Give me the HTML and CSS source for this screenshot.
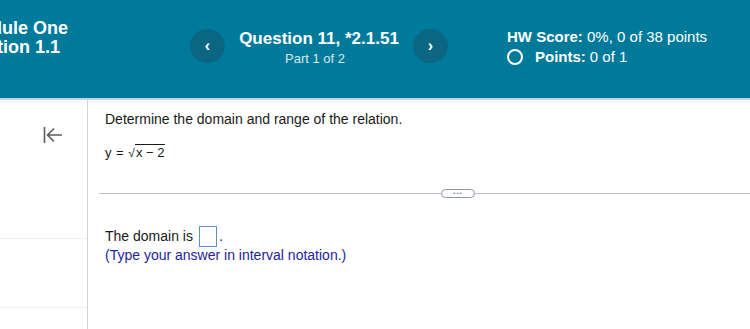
FILE: index.html
```html
<!doctype html>
<html>
<head>
    <meta charset="utf-8" />
    <title>Question 11</title>
    <link rel="stylesheet" href="styles.css">
</head>
<body>
<div class="header">
    <div class="header__crumbs">
        <div>Module One</div>
        <div>Section 1.1</div>
    </div>
    <div class="header__nav">
        <button class="nav-btn">&lsaquo;</button>
        <div class="header__title">
            <div class="header__question">Question 11, *2.1.51</div>
            <div class="header__part">Part 1 of 2</div>
        </div>
        <button class="nav-btn">&rsaquo;</button>
    </div>
    <div class="header__score">
        <div><b>HW Score:</b> 0%, 0 of 38 points</div>
        <div class="header__points"><span class="ring"></span><b>Points:</b> 0 of 1</div>
    </div>
</div>
<div class="main">
    <div class="sidebar">
        <svg class="sidebar__collapse" width="20" height="18" viewBox="0 0 20 18">
            <path d="M1.5 1v16M19 9H5M11 2.5L4.5 9l6.5 6.5" fill="none" stroke="#5c5c5c" stroke-width="1.6"/>
        </svg>
        <div class="sidebar__rule sidebar__rule--one"></div>
        <div class="sidebar__rule sidebar__rule--two"></div>
    </div>
    <div class="content">
        <div class="question">
            <p class="question__text">Determine the domain and range of the relation.</p>
            <p class="question__eq">y = <span class="radical">&radic;</span><span class="radicand">x &minus; 2</span></p>
        </div>
        <div class="divider">
            <span class="divider__pill">&bull;&bull;&bull;</span>
        </div>
        <div class="answer">
            <p class="answer__line">The domain is <span class="answer__box"></span>.</p>
            <p class="answer__hint">(Type your answer in interval notation.)</p>
        </div>
    </div>
</div>
</body>
</html>
```

FILE: styles.css
```css
body {
    margin: 0;
    font-family: "Liberation Sans", Arial, sans-serif;
    background: #fff;
    width: 750px;
    height: 329px;
    overflow: hidden;
}
.header {
    height: 98px;
    background-color: #007a9b;
    border-bottom: 2px solid #c7d4e0;
    color: #fff;
    display: flex;
    overflow: hidden;
}
.header__crumbs {
    margin-left: -35px;
    padding-top: 19px;
    width: 225px;
    font-size: 18px;
    font-weight: bold;
    line-height: 19px;
}
.header__nav {
    display: flex;
    align-items: flex-start;
    padding-top: 29px;
    width: 268px;
}
.nav-btn {
    width: 35px;
    height: 34px;
    border: none;
    border-radius: 50%;
    background-color: #0a6683;
    color: #fff;
    font-family: "Liberation Sans", Arial, sans-serif;
    font-size: 16px;
    font-weight: bold;
    line-height: 30px;
    padding: 0;
}
.header__title {
    width: 188px;
    text-align: center;
}
.header__question {
    font-size: 17px;
    font-weight: bold;
    line-height: 20px;
}
.header__part {
    font-size: 13px;
    color: #d6e8ef;
    margin-top: 2px;
    margin-right: 8px;
}
.header__score {
    padding-top: 27px;
    padding-left: 49px;
    font-size: 15px;
    line-height: 20px;
}
.header__points {
    display: flex;
    align-items: center;
}
.ring {
    width: 12px;
    height: 12px;
    border: 2px solid #fff;
    border-radius: 50%;
    margin-right: 12px;
}
.header__points b {
    margin-right: 4px;
}
.main {
    display: flex;
    height: 229px;
}
.sidebar {
    width: 87px;
    border-right: 1px solid #d0d4dc;
    position: relative;
}
.sidebar__collapse {
    display: block;
    margin: 26px 0 0 43px;
}
.sidebar__rule {
    position: absolute;
    left: 0;
    right: 0;
    border-top: 1px solid #f0f0f0;
}
.sidebar__rule--one {
    top: 138px;
}
.sidebar__rule--two {
    top: 207px;
}
.content {
    flex: 1;
    padding-left: 11px;
}
.question {
    padding-left: 6px;
    height: 91px;
}
.question p {
    margin: 0;
    color: #1a1a1a;
}
.question__text {
    font-size: 14px;
    padding-top: 11px;
}
.question__eq {
    font-size: 13px;
    padding-top: 18px;
    word-spacing: 1px;
}
.radical {
    font-size: 12px;
}
.radicand {
    border-top: 1px solid #1a1a1a;
    padding: 0 1px;
    word-spacing: 0;
}
.divider {
    height: 1px;
    background-color: #b9bfcb;
    position: relative;
    margin-top: 2px;
}
.divider__pill {
    position: absolute;
    left: 342px;
    top: -4px;
    width: 32px;
    height: 7px;
    border: 1px solid #8f96a3;
    border-radius: 5px;
    background: #fff;
    font-size: 6px;
    line-height: 7px;
    text-align: center;
    color: #6a7280;
    letter-spacing: 1px;
}
.answer {
    padding: 31px 0 0 6px;
    font-size: 14px;
}
.answer p {
    margin: 0;
}
.answer__line {
    color: #1a1a1a;
    display: flex;
    align-items: center;
    height: 22px;
}
.answer__box {
    display: inline-block;
    width: 16px;
    height: 19px;
    border: 1px solid #5b8fd9;
    margin-left: 6px;
    margin-right: 2px;
}
.answer__hint {
    color: #24249a;
    margin-top: 1px;
}
```
